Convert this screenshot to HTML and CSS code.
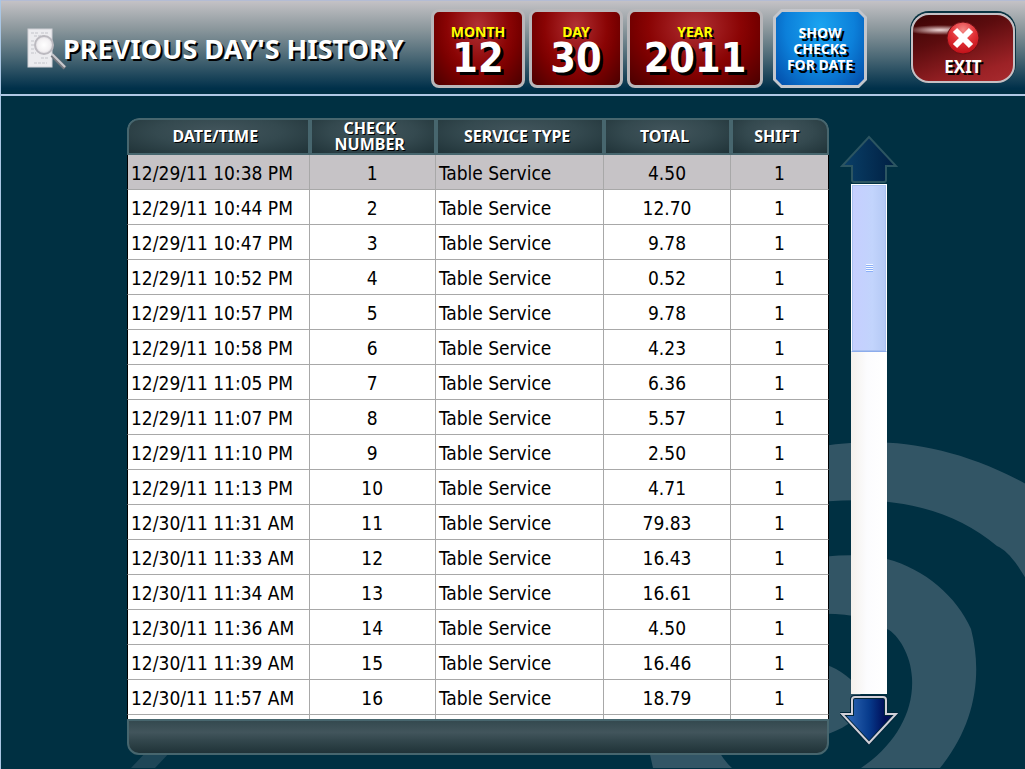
FILE: index.html
```html
<!DOCTYPE html>
<html lang="en">
<head>
  <meta charset="UTF-8">
  <meta name="viewport" content="width=device-width, initial-scale=1.0">
  <title>Previous Day's History</title>
  <link rel="stylesheet" href="styles.css">
</head>
<body>

  <svg class="swirl" viewBox="0 0 1025 769" preserveAspectRatio="xMaxYMax slice" aria-hidden="true">
    <path d="M800 450 C870 436 940 438 1026 484 V579 C1015 560 1006 550 997 546 C950 507 890 493 800 504 Z"/>
    <path d="M800 560 C835 554 865 554 887 559 C925 569 957 597 971 629 C983 675 975 725 940 768 H861 C895 745 914 712 912 678 C911 655 898 634 887 629 C870 616 840 611 800 615 Z"/>
    <path d="M800 660 C835 660 866 685 861 706 C856 722 845 727 828 734 H800 Z"/>
    <path d="M649 750 H718 Q725 762 732 768 H653 Z"/>
    <path class="faint" d="M148 750 H172 L155 768 H131 Z"/>
  </svg>

  <header class="topbar">
    <svg class="report-icon" viewBox="0 0 40 42" aria-hidden="true">
      <defs>
        <radialGradient id="lens">
          <stop offset="0" stop-color="#ffffff"/>
          <stop offset="0.7" stop-color="#f3f1f3"/>
          <stop offset="1" stop-color="#d9d7dc"/>
        </radialGradient>
      </defs>
      <rect x="1" y="1" width="24" height="38" fill="#ececef" stroke="#d0d0d6"/>
      <path d="M4 5h8m2 0h8M7 8h12M4 13h4M4 17h3M4 21h3M4 25h5M14 30h8M7 35h13" stroke="#c3c4ca" stroke-width="1" stroke-dasharray="3 1"/>
      <path d="M25 27L38 40" stroke="#777980" stroke-width="4"/>
      <path d="M25 26L38 39" stroke="#c9cace" stroke-width="2"/>
      <circle cx="17" cy="17" r="9" fill="url(#lens)" stroke="#bcbac0" stroke-width="2"/>
    </svg>
    <h1>PREVIOUS DAY'S HISTORY</h1>

    <div class="date-buttons">
      <button type="button" class="date-btn"><span>MONTH</span><strong>12</strong></button>
      <button type="button" class="date-btn"><span>DAY</span><strong>30</strong></button>
      <button type="button" class="date-btn year"><span>YEAR</span><strong>2011</strong></button>
    </div>
    <button type="button" class="show-btn"><span>SHOW CHECKS FOR DATE</span></button>
    <button type="button" class="exit-btn">
      <svg viewBox="0 0 34 34" aria-hidden="true">
        <defs>
          <radialGradient id="ball" cx="0.5" cy="0.25" r="0.75">
            <stop offset="0" stop-color="#f58a86"/>
            <stop offset="0.5" stop-color="#e23237"/>
            <stop offset="1" stop-color="#c01018"/>
          </radialGradient>
        </defs>
        <circle cx="17" cy="17" r="16" fill="url(#ball)" stroke="#6a1014" stroke-width="1"/>
        <path d="M9 9L25 25M25 9L9 25" stroke="#ffffff" stroke-width="6"/>
      </svg>
      EXIT
    </button>
  </header>

  <main>
    <section class="panel">
      <div class="table-wrap">
        <table>
          <colgroup>
            <col class="c-date"><col class="c-check"><col class="c-type"><col class="c-total"><col class="c-shift">
          </colgroup>
          <thead>
            <tr>
              <th scope="col">DATE/TIME</th>
              <th scope="col">CHECK<br>NUMBER</th>
              <th scope="col">SERVICE TYPE</th>
              <th scope="col">TOTAL</th>
              <th scope="col">SHIFT</th>
            </tr>
          </thead>
          <tbody id="checks"></tbody>
        </table>
      </div>
      <div class="panel-foot"></div>
    </section>

    <div class="scroller">
      <button type="button" class="arrow up" aria-label="Scroll up">
        <svg viewBox="0 0 58 49">
          <defs>
            <linearGradient id="upFill">
              <stop offset="0" stop-color="#0a4068"/>
              <stop offset="1" stop-color="#001f42"/>
            </linearGradient>
          </defs>
          <path d="M29 2L56 31H46V45Q46 47 44 47H14Q12 47 12 45V31H2Z" fill="url(#upFill)" stroke="#2c5561" stroke-width="2"/>
        </svg>
      </button>
      <div class="track">
        <div class="thumb"><i></i></div>
      </div>
      <button type="button" class="arrow down" aria-label="Scroll down">
        <svg viewBox="0 0 58 51">
          <defs>
            <linearGradient id="downFill">
              <stop offset="0.1" stop-color="#2d66b4"/>
              <stop offset="0.5" stop-color="#073b8c"/>
              <stop offset="0.8" stop-color="#000d58"/>
            </linearGradient>
          </defs>
          <path d="M15 3H43Q46 3 46 6V20H56L29 49L2 20H12V6Q12 3 15 3Z" fill="url(#downFill)" stroke="#00263a" stroke-width="4"/>
          <path d="M15 3H43Q46 3 46 6V20H56L29 49L2 20H12V6Q12 3 15 3Z" fill="none" stroke="#d2d0d8" stroke-width="2"/>
        </svg>
      </button>
    </div>
  </main>

  <script>
    const checks = [
      ['12/29/11 10:38 PM', '4.50'],
      ['12/29/11 10:44 PM', '12.70'],
      ['12/29/11 10:47 PM', '9.78'],
      ['12/29/11 10:52 PM', '0.52'],
      ['12/29/11 10:57 PM', '9.78'],
      ['12/29/11 10:58 PM', '4.23'],
      ['12/29/11 11:05 PM', '6.36'],
      ['12/29/11 11:07 PM', '5.57'],
      ['12/29/11 11:10 PM', '2.50'],
      ['12/29/11 11:13 PM', '4.71'],
      ['12/30/11 11:31 AM', '79.83'],
      ['12/30/11 11:33 AM', '16.43'],
      ['12/30/11 11:34 AM', '16.61'],
      ['12/30/11 11:36 AM', '4.50'],
      ['12/30/11 11:39 AM', '16.46'],
      ['12/30/11 11:57 AM', '18.79']
    ];

    const body = document.getElementById('checks');

    checks.forEach((check, i) => {
      const row = body.insertRow();
      if (i === 0) {
        row.className = 'selected';
      }
      [check[0], i + 1, 'Table Service', check[1], 1].forEach(value => {
        row.insertCell().textContent = value;
      });
    });

    // empty row after the last check
    const blank = body.insertRow();
    for (let i = 0; i < 5; i++) {
      blank.insertCell();
    }
  </script>
</body>
</html>
```
FILE: styles.css
```css
* {
  box-sizing: border-box;
}

body {
  margin: 0;
  height: 100vh;
  display: flex;
  flex-direction: column;
  position: relative;
  overflow: hidden;
  background-color: #003042;
  border-left: 1px solid #a9c6e4;
  font-family: "DejaVu Sans Condensed", "DejaVu Sans", sans-serif;
}

button {
  font-family: "Noto Sans", sans-serif;
  font-weight: bold;
  color: white;
  padding: 0;
  cursor: pointer;
}

.swirl {
  position: absolute;
  top: 0;
  left: 0;
  width: 100%;
  height: 100%;
  fill: #325565;
}

.swirl .faint {
  opacity: 0.6;
}

/* top bar */
.topbar {
  position: relative;
  display: flex;
  align-items: center;
  height: 96px;
  padding: 2px 10px 0 26px;
  border-top: 1px solid #b4bcd4;
  border-bottom: 2px solid #b0c8e4;
  background: linear-gradient(#c4c2c6, #8b979c 30%, #4c6976 60%, #00304a 94%, #003042);
}

.report-icon {
  width: 40px;
  height: 42px;
  margin-right: -4px;
}

h1 {
  flex: 1;
  margin: 0;
  font-family: "Noto Sans", sans-serif;
  font-size: 27px;
  line-height: 32px;
  color: white;
  text-shadow: 2px 2px 0 black;
  white-space: nowrap;
}

.date-buttons {
  display: flex;
  gap: 4px;
  margin-right: 10px;
}

.date-btn {
  display: flex;
  flex-direction: column;
  align-items: center;
  justify-content: center;
  width: 94px;
  height: 79px;
  padding-top: 4px;
  border: 3px solid #b9b7ba;
  border-radius: 8px;
  background: radial-gradient(ellipse at 50% 20%, #b03034, #8a0404 50%, #7a0000 65%, #3c0000 110%);
}

.date-btn.year {
  width: 136px;
}

.date-btn span {
  font-size: 14px;
  line-height: 14px;
  color: #ffff00;
  text-shadow: 2px 2px 0 black;
}

.date-btn strong {
  font-family: "DejaVu Sans Condensed", "DejaVu Sans", sans-serif;
  font-size: 41px;
  line-height: 38px;
  text-shadow: 3px 3px 0 black;
}

.show-btn {
  width: 94px;
  height: 79px;
  padding: 3px;
  margin-right: 44px;
  border: 0;
  background: #c4c6cc;
  font-size: 14px;
  line-height: 16px;
  text-shadow: 3px 3px 0 black;
  clip-path: polygon(8px 0, 86px 0, 100% 8px, 100% 71px, 86px 100%, 8px 100%, 0 71px, 0 8px);
}

.show-btn span {
  display: flex;
  align-items: center;
  height: 73px;
  padding: 0 8px;
  background: radial-gradient(ellipse at 50% 20%, #1ba4f0, #0c80da 55%, #003f9c 110%);
  clip-path: polygon(6px 0, 82px 0, 100% 6px, 100% 67px, 82px 100%, 6px 100%, 0 67px, 0 6px);
}

.exit-btn {
  display: flex;
  flex-direction: column;
  align-items: center;
  justify-content: center;
  gap: 2px;
  width: 104px;
  height: 70px;
  padding-top: 2px;
  margin-bottom: 2px;
  border: 2px solid #c6c0c4;
  border-radius: 18px;
  background:
    radial-gradient(ellipse 34px 5px at 27px 15px, #f0d8d8, transparent),
    linear-gradient(160deg, #3a0404, #5c0c0e 35%, #9c2226 80%, #a82a2e);
  box-shadow: 0 -1px 0 1px #0a3442;
  font-size: 17px;
  line-height: 20px;
  text-shadow: 2px 2px 0 black;
}

.exit-btn svg {
  width: 34px;
  height: 34px;
}

/* check list */
main {
  position: relative;
  flex: 1;
  min-height: 0;
  display: flex;
  gap: 11px;
  padding: 22px 127px 14px 126px;
}

.panel {
  flex: 1;
  display: flex;
  flex-direction: column;
}

.table-wrap {
  flex: 1;
  min-height: 0;
  overflow: hidden;
  border-radius: 12px 12px 0 0;
}

table {
  width: 100%;
  table-layout: fixed;
  border-collapse: separate;
  border-spacing: 0;
}

.c-date { width: 26%; }
.c-check { width: 18%; }
.c-type { width: 24%; }
.c-total { width: 18%; }
.c-shift { width: 14%; }

th {
  height: 37px;
  padding: 0 6px 1px 0;
  border: 2px solid #47666e;
  background: radial-gradient(ellipse at 50% 35%, #42555c, #34494f 50%, #203338);
  color: white;
  font-family: "Noto Sans", sans-serif;
  font-size: 16px;
  line-height: 16px;
  text-shadow: 1px 1px 0 black;
}

th:first-child {
  border-top-left-radius: 12px;
}

th:last-child {
  border-top-right-radius: 12px;
}

td {
  height: 35px;
  padding: 2px 0 0;
  background-color: white;
  border-right: 1px solid #a8a8a8;
  border-bottom: 1px solid #a8a8a8;
  font-size: 19px;
  line-height: 24px;
  text-align: center;
}

td:first-child {
  border-left: 1px solid black;
}

td:last-child {
  border-right-color: black;
}

td:nth-child(1),
td:nth-child(3) {
  padding-left: 3px;
  text-align: left;
}

.selected td {
  background-color: #c6c3c6;
}

.panel-foot {
  height: 36px;
  border: 2px solid #47666e;
  border-radius: 0 0 12px 12px;
  background: linear-gradient(#34494f, #42555c 35%, #33474d 60%, #203338);
}

/* scroll bar */
.scroller {
  display: flex;
  flex-direction: column;
  align-items: center;
  width: 58px;
  padding: 17px 0 10px;
}

.arrow {
  display: block;
  width: 58px;
  border: 0;
  background: none;
}

.arrow svg {
  display: block;
  width: 100%;
}

.track {
  flex: 1;
  width: 36px;
  background: linear-gradient(90deg, #f4f1ec, #fcfcfe 45%, white);
}

.thumb {
  display: flex;
  align-items: center;
  justify-content: center;
  height: 33%;
  border: 1px solid white;
  border-bottom-color: #8cacec;
  background: linear-gradient(90deg, #c6ceff, #c2d4fc 60%, #b4c8f4);
  box-shadow: inset 0 0 0 1px #a8c0f0;
}

.thumb i {
  width: 7px;
  height: 8px;
  background: repeating-linear-gradient(#f4f8ff 0 1px, #8cb0f8 1px 2px);
}
```
